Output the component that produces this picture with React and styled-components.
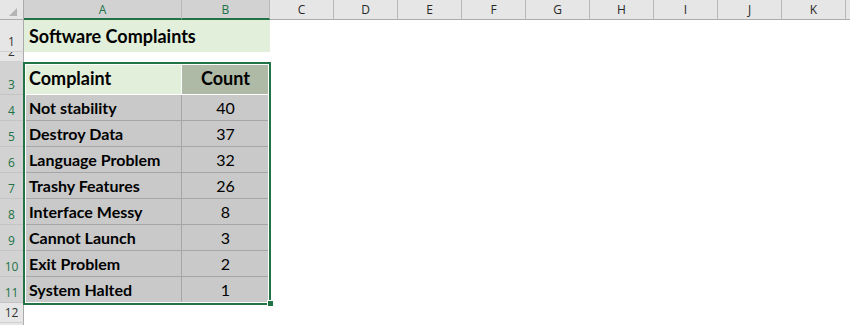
import React from "react";
import styled, { createGlobalStyle } from "styled-components";

const GREEN = "#217346";

const Global = createGlobalStyle`
  html, body { margin: 0; padding: 0; background: #fff; overflow: hidden; }
  body { width: 850px; height: 325px; }
  * { box-sizing: border-box; }
`;

const Sheet = styled.div`
  position: relative;
  display: grid;
  grid-template-columns: 24px 158px 88px repeat(9, 64px) 1fr;
  grid-template-rows: 20px 32px 10px 33px repeat(8, 26px) 20px 20px;
  width: 850px;
  height: 325px;
  overflow: hidden;
  background: #fff;
`;

const Corner = styled.div`
  position: relative;
  background: #e6e6e6;
  border-right: 1px solid #ababab;
  border-bottom: 1px solid #ababab;
  svg { position: absolute; left: 9px; top: 8px; }
`;

const ColHeader = styled.div`
  display: flex;
  align-items: center;
  justify-content: center;
  background: ${(p) => (p.$selected ? "#d2d2d2" : "#e6e6e6")};
  border-right: 1px solid ${(p) => (p.$last ? "transparent" : "#b8b8b8")};
  border-bottom: ${(p) => (p.$selected ? `2px solid ${GREEN}` : "1px solid #ababab")};
  padding-top: ${(p) => (p.$selected ? "1px" : "0")};
  font-family: "Open Sans", "Liberation Sans", sans-serif;
  font-size: 12px;
  color: ${(p) => (p.$selected ? GREEN : "#262626")};
`;

const RowHeader = styled.div`
  display: flex;
  align-items: flex-end;
  justify-content: center;
  padding-bottom: 2px;
  background: ${(p) => (p.$selected ? "#d2d2d2" : "#e6e6e6")};
  border-right: 1px solid #ababab;
  border-bottom: 1px solid ${(p) => (p.$selected ? "#c4c4c4" : "#d0d0d0")};
  font-family: "Open Sans", "Liberation Sans", sans-serif;
  font-size: 12px;
  line-height: 14px;
  overflow: hidden;
  color: ${(p) => (p.$selected ? GREEN : "#333")};
`;

const Cell = styled.div`
  display: flex;
  align-items: center;
  justify-content: ${(p) => (p.$center ? "center" : "flex-start")};
  grid-column: span ${(p) => p.$span || 1};
  padding: ${(p) => (p.$center ? "0" : "0 0 0 5px")};
  background: ${(p) => p.$fill || "#fff"};
  border-right: ${(p) => (p.$line ? `1px solid ${p.$line}` : "none")};
  border-bottom: ${(p) => (p.$line ? `1px solid ${p.$line}` : "none")};
  font-family: Lato, "Liberation Sans", sans-serif;
  font-weight: ${(p) => (p.$bold ? 700 : 400)};
  font-size: ${(p) => p.$size || 16}px;
  color: #000;
  white-space: nowrap;
`;

const Selection = styled.div`
  position: absolute;
  left: 23px;
  top: 62px;
  width: 248px;
  height: 243px;
  border: 2px solid ${GREEN};
  box-shadow: inset 0 0 0 1px #fff;
  pointer-events: none;
`;

const FillHandle = styled.div`
  position: absolute;
  right: -5px;
  bottom: -4px;
  width: 5px;
  height: 5px;
  box-sizing: content-box;
  background: ${GREEN};
  border: 1px solid #fff;
`;

const COLS = ["A", "B", "C", "D", "E", "F", "G", "H", "I", "J", "K"];
const DATA = [
  ["Not stability", 40],
  ["Destroy Data", 37],
  ["Language Problem", 32],
  ["Trashy Features", 26],
  ["Interface Messy", 8],
  ["Cannot Launch", 3],
  ["Exit Problem", 2],
  ["System Halted", 1],
];

const Empties = ({ n }) =>
  Array.from({ length: n }, (_, i) => <Cell key={i} />);

export default function App() {
  return (
    <>
      <Global />
      <Sheet>
        <Corner>
          <svg width="8" height="8" viewBox="0 0 8 8">
            <polygon points="8,0 8,8 0,8" fill="#b4b4b4" />
          </svg>
        </Corner>
        {COLS.map((c, i) => (
          <ColHeader key={c} $selected={i < 2}>
            {c}
          </ColHeader>
        ))}
        <ColHeader $last />

        <RowHeader>1</RowHeader>
        <Cell $span={2} $fill="#e2efda" $bold $size={18}>
          Software Complaints
        </Cell>
        <Empties n={10} />

        <RowHeader>2</RowHeader>
        <Empties n={12} />

        <RowHeader $selected>3</RowHeader>
        <Cell $fill="#e2efda" $line="#fff" $bold $size={18}>
          Complaint
        </Cell>
        <Cell $fill="#aeb9a6" $line="#fff" $bold $size={18} $center>
          Count
        </Cell>
        <Empties n={10} />

        {DATA.map(([name, count], i) => (
          <React.Fragment key={name}>
            <RowHeader $selected>{i + 4}</RowHeader>
            <Cell $fill="#c9c9c9" $line="#a6a6a6" $bold>
              {name}
            </Cell>
            <Cell $fill="#c9c9c9" $line="#a6a6a6" $center>
              {count}
            </Cell>
            <Empties n={10} />
          </React.Fragment>
        ))}

        <RowHeader>12</RowHeader>
        <Empties n={12} />
        <RowHeader />
        <Empties n={12} />

        <Selection>
          <FillHandle />
        </Selection>
      </Sheet>
    </>
  );
}
